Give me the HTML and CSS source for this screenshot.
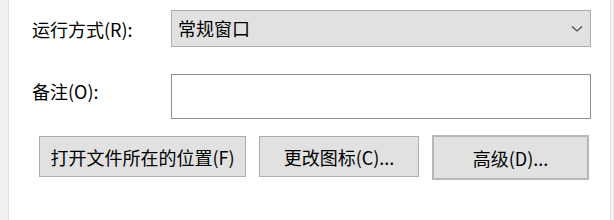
FILE: index.html
```html
<!DOCTYPE html>
<html lang="zh-CN">
<head>
<meta charset="utf-8">
<link rel="stylesheet" href="styles.css">
</head>
<body>
<div class="frame">
  <div class="edge edge-left"></div>
  <div class="main">
    <div class="form">
      <div class="label">运行方式(R):</div>
      <div class="combo">
        <span class="combo-text">常规窗口</span>
        <svg class="chev" width="12" height="8" viewBox="0 0 12 8"><path d="M1 1.5 L6 6 L11 1.5" fill="none" stroke="#4d4d4d" stroke-width="1.3"/></svg>
      </div>
      <div class="label label-top">备注(O):</div>
      <div class="textbox"></div>
    </div>
    <div class="buttons">
      <div class="btn btn-1">打开文件所在的位置(F)</div>
      <div class="btn btn-2">更改图标(C)...</div>
      <div class="btn btn-3">高级(D)...</div>
    </div>
  </div>
  <div class="edge edge-right"></div>
</div>
</body>
</html>
```
FILE: styles.css
```css
html, body {
  margin: 0;
  padding: 0;
  background: #ffffff;
}
body {
  width: 614px;
  height: 220px;
  overflow: hidden;
  font-family: "Noto Sans CJK SC", "Noto Sans", sans-serif;
  font-size: 18px;
  color: #000;
}
.frame {
  display: flex;
  height: 220px;
}
.edge {
  background: #f0f0f0;
}
.edge-left {
  width: 8px;
  border-right: 1px solid #e3e3e3;
}
.edge-right {
  width: 3px;
  border-left: 1px solid #e3e3e3;
}
.main {
  flex: 1;
  background: #fff;
  padding: 10px 19px 0 23px;
}
.form {
  display: grid;
  grid-template-columns: 139px 1fr;
  row-gap: 27px;
  align-items: center;
}
.label {
  line-height: 22px;
  white-space: nowrap;
}
.label-top {
  align-self: start;
  padding-top: 6px;
}
.combo {
  height: 35px;
  background: #e1e1e1;
  border: 1px solid #adadad;
  display: flex;
  align-items: center;
  justify-content: space-between;
  padding: 0 7px 0 6px;
}
.combo-text {
  line-height: 22px;
  position: relative;
  top: -1px;
}
.chev {
  display: block;
}
.textbox {
  height: 43px;
  border: 1px solid #8f8f8f;
  background: #fff;
}
.buttons {
  display: flex;
  align-items: flex-start;
  gap: 13px;
  margin-top: 17px;
  margin-left: 7px;
}
.btn {
  height: 39px;
  background: #e1e1e1;
  border: 1px solid #adadad;
  display: flex;
  align-items: center;
  justify-content: center;
  line-height: 22px;
  white-space: nowrap;
  box-sizing: content-box;
}
.btn-1 { width: 205px; }
.btn-2 { width: 158px; }
.btn-3 {
  width: 153px;
  height: 41px;
  border: 2px solid #b8b8b8;
  margin-top: -1px;
}
```
